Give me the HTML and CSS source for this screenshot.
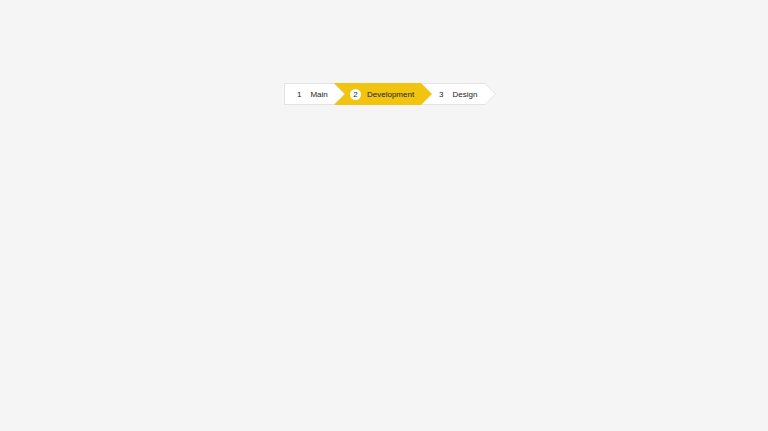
FILE: index.html
```html
<!DOCTYPE html>
<html>
<head>
<meta charset="utf-8">
<link rel="stylesheet" href="styles.css">
</head>
<body>
<div class="page">
  <ol class="steps">
    <li class="step step-first"><span class="num">1</span><span class="label">Main</span></li>
    <li class="step step-active"><span class="num circle">2</span><span class="label">Development</span></li>
    <li class="step step-last"><span class="num">3</span><span class="label">Design</span></li>
  </ol>
</div>
</body>
</html>
```
FILE: styles.css
```css
html, body {
  margin: 0;
  padding: 0;
  background: #f5f5f5;
  width: 768px;
  height: 431px;
  overflow: hidden;
}
.page {
  padding: 83px 0 0 284px;
  font-family: "Liberation Sans", Arial, sans-serif;
  font-size: 8px;
  line-height: 10px;
  color: #222;
}
.steps {
  display: flex;
  list-style: none;
  margin: 0;
  padding: 0;
  height: 22px;
}
.step {
  position: relative;
  display: flex;
  align-items: center;
  height: 22px;
  padding-top: 2px;
  box-sizing: border-box;
  background: #fff;
  border-top: 1px solid #e3e3e3;
  border-bottom: 1px solid #e3e3e3;
}
.step::before,
.step::after {
  content: "";
  position: absolute;
  top: -1px;
  width: 0;
  height: 0;
  border-style: solid;
  z-index: 2;
}
.step::before {
  right: -11px;
  border-width: 11px 0 11px 11px;
  border-color: transparent transparent transparent #e3e3e3;
}
.step::after {
  right: -10px;
  top: 0;
  border-width: 10px 0 10px 10px;
  border-color: transparent transparent transparent #fff;
}
.step-first {
  width: 50px;
  padding-left: 12px;
  border-left: 1px solid #e3e3e3;
}
.step-first .num { margin-right: 9px; }
.step-active {
  width: 87px;
  padding-left: 16px;
  background: #f1c40f;
  border-color: #f1c40f;
}
.step-active::before {
  border-color: transparent transparent transparent #f1c40f;
}
.step-active::after {
  border-color: transparent transparent transparent #f1c40f;
}
.step-last {
  width: 64px;
  padding-left: 18px;
}
.step-last .num { margin-right: 9px; }
.num {
  display: block;
}
.circle {
  width: 11px;
  height: 11px;
  line-height: 11px;
  border-radius: 50%;
  background: #fff;
  text-align: center;
  margin-right: 6px;
  margin-top: -2px;
}
.label { display: block; white-space: nowrap; }
```
